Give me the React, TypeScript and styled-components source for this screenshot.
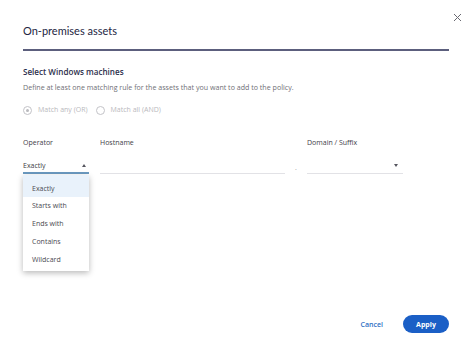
import styled, { createGlobalStyle } from "styled-components";

const GlobalStyle = createGlobalStyle`
  html, body {
    margin: 0;
    padding: 0;
    background: #fff;
    font-family: "Open Sans", "Noto Sans", sans-serif;
  }
`;

const Dialog = styled.div`
  position: relative;
  width: 474px;
  height: 348px;
  box-sizing: border-box;
  padding: 0 25px 0 23px;
  display: flex;
  flex-direction: column;
  background: #fff;
`;

const CloseButton = styled.button`
  position: absolute;
  top: 11px;
  right: 11px;
  width: 12px;
  height: 12px;
  padding: 0;
  border: 0;
  background: none;
  display: flex;
  align-items: center;
  justify-content: center;
`;

const Header = styled.header`
  padding-top: 23px;
  border-bottom: 2px solid #5c5f7d;
  padding-bottom: 10px;
`;

const Title = styled.h1`
  margin: 0;
  font-family: Lato, "Open Sans", sans-serif;
  font-size: 11px;
  line-height: 16px;
  font-weight: 400;
  color: #23253f;
`;

const Section = styled.section`
  margin-top: 15px;
  display: flex;
  flex-direction: column;
`;

const SectionTitle = styled.h2`
  margin: 0;
  font-size: 8.1px;
  line-height: 12px;
  font-weight: 600;
  color: #2d2f4c;
`;

const Description = styled.p`
  margin: 4px 0 0;
  font-size: 7.1px;
  line-height: 10px;
  color: #6f6f76;
`;

const RadioGroup = styled.div`
  margin-top: 13px;
  display: flex;
  align-items: center;
  gap: 8px;
`;

const RadioOption = styled.label`
  display: flex;
  align-items: center;
  gap: 6px;
  font-size: 7px;
  line-height: 10px;
  color: #b9b9bd;
`;

const RadioDot = styled.span<{ $checked?: boolean }>`
  width: 7px;
  height: 7px;
  border-radius: 50%;
  border: 1px solid #c3c3c8;
  box-sizing: content-box;
  display: flex;
  align-items: center;
  justify-content: center;
  &::after {
    content: "";
    width: 3px;
    height: 3px;
    border-radius: 50%;
    background: ${({ $checked }) => ($checked ? "#b9b9bd" : "transparent")};
  }
`;

const Fields = styled.div`
  margin-top: 23px;
  display: grid;
  grid-template-columns: 66px 196px 22px 96px;
  align-items: end;
`;

const Field = styled.div<{ $ml?: number }>`
  position: relative;
  display: flex;
  flex-direction: column;
  margin-left: ${({ $ml }) => $ml ?? 0}px;
`;

const FieldLabel = styled.span`
  font-size: 7px;
  line-height: 10px;
  color: #3e3e48;
`;

const Control = styled.div<{ $active?: boolean }>`
  margin-top: 10px;
  height: 14px;
  display: flex;
  align-items: center;
  justify-content: space-between;
  border-bottom: ${({ $active }) =>
    $active ? "2px solid #6b9ac0" : "1px solid #e2e2e6"};
  padding-bottom: ${({ $active }) => ($active ? 0 : 1)}px;
  font-size: 7px;
  color: #3b3b44;
`;

const Caret = styled.span<{ $up?: boolean; $mr?: number }>`
  width: 0;
  height: 0;
  margin-right: ${({ $mr }) => $mr ?? 5}px;
  border-left: 2.5px solid transparent;
  border-right: 2.5px solid transparent;
  ${({ $up }) =>
    $up ? "border-bottom: 3px solid #55555e;" : "border-top: 3px solid #55555e;"}
`;

const Dot = styled.span`
  align-self: end;
  text-align: center;
  font-size: 7px;
  line-height: 12px;
  color: #9a9aa2;
`;

const Menu = styled.ul`
  position: absolute;
  top: 100%;
  left: 0;
  width: 66px;
  margin: 1px 0 0;
  padding: 0 0 3px;
  list-style: none;
  background: #fff;
  box-shadow: 0 2px 6px rgba(0, 0, 0, 0.28);
  z-index: 2;
`;

const MenuItem = styled.li<{ $selected?: boolean }>`
  box-sizing: border-box;
  height: 17.75px;
  display: flex;
  align-items: center;
  padding-left: 9px;
  font-size: 7px;
  color: #4a4a52;
  background: ${({ $selected }) => ($selected ? "#e9f2fb" : "transparent")};
  &:first-child {
    height: 22px;
    padding-top: 4px;
  }
`;

const Footer = styled.footer`
  margin-top: auto;
  margin-bottom: 15px;
  display: flex;
  justify-content: flex-end;
  align-items: center;
  gap: 20px;
`;

const TextButton = styled.button`
  border: 0;
  background: none;
  padding: 0;
  font-family: inherit;
  font-size: 7px;
  font-weight: 600;
  color: #2f6fc4;
`;

const PrimaryButton = styled.button`
  width: 46px;
  height: 18px;
  border: 0;
  border-radius: 9px;
  background: #1b5fc6;
  color: #fff;
  font-family: inherit;
  font-size: 7px;
  font-weight: 700;
`;

const operators = ["Exactly", "Starts with", "Ends with", "Contains", "Wildcard"];

export default function App() {
  return (
    <>
      <GlobalStyle />
      <Dialog>
        <CloseButton aria-label="Close">
          <svg width="9" height="9" viewBox="0 0 9 9">
            <path d="M1 1L8 8M8 1L1 8" stroke="#6a6a72" strokeWidth="1" />
          </svg>
        </CloseButton>
        <Header>
          <Title>On-premises assets</Title>
        </Header>
        <Section>
          <SectionTitle>Select Windows machines</SectionTitle>
          <Description>
            Define at least one matching rule for the assets that you want to add to the policy.
          </Description>
          <RadioGroup>
            <RadioOption>
              <RadioDot $checked />
              Match any (OR)
            </RadioOption>
            <RadioOption>
              <RadioDot />
              Match all (AND)
            </RadioOption>
          </RadioGroup>
          <Fields>
            <Field>
              <FieldLabel>Operator</FieldLabel>
              <Control $active>
                Exactly
                <Caret $up $mr={3} />
              </Control>
              <Menu>
                {operators.map((op) => (
                  <MenuItem key={op} $selected={op === "Exactly"}>
                    {op}
                  </MenuItem>
                ))}
              </Menu>
            </Field>
            <Field $ml={11}>
              <FieldLabel>Hostname</FieldLabel>
              <Control />
            </Field>
            <Dot>.</Dot>
            <Field>
              <FieldLabel>Domain / Suffix</FieldLabel>
              <Control>
                <span />
                <Caret />
              </Control>
            </Field>
          </Fields>
        </Section>
        <Footer>
          <TextButton>Cancel</TextButton>
          <PrimaryButton>Apply</PrimaryButton>
        </Footer>
      </Dialog>
    </>
  );
}
